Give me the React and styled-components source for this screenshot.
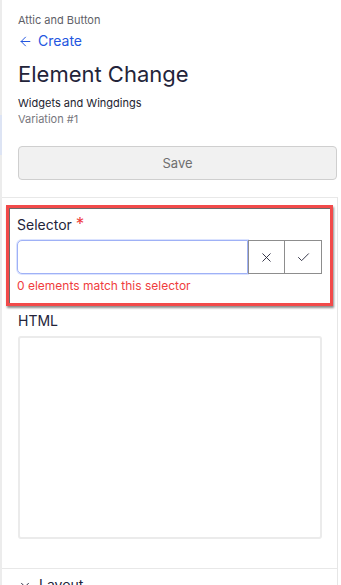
import React from 'react';
import styled, { createGlobalStyle } from 'styled-components';
import { ArrowLeft, X, Check, ChevronDown } from 'lucide-react';

const GlobalStyle = createGlobalStyle`
  html, body {
    margin: 0;
    padding: 0;
    background: #ffffff;
  }
  body {
    font-family: Inter, "Noto Sans", sans-serif;
    color: #1f2037;
    -webkit-font-smoothing: antialiased;
  }
`;

const Page = styled.div`
  display: flex;
  height: 585px;
  overflow: hidden;
`;

const Rail = styled.div`
  width: 2px;
  flex-shrink: 0;
  background: linear-gradient(
    to bottom,
    #ececec 0,
    #ececec 115px,
    #dde4f4 115px,
    #dde4f4 155px,
    #ececec 155px
  );
`;

const Panel = styled.div`
  flex: 1;
  display: flex;
  flex-direction: column;
  min-width: 0;
`;

const Header = styled.header`
  display: flex;
  flex-direction: column;
  padding: 13px 3px 17px 16px;
`;

const Crumb = styled.div`
  font-size: 11px;
  line-height: 14px;
  color: #5f5f68;
`;

const BackLink = styled.a`
  display: flex;
  align-items: center;
  gap: 5px;
  margin-top: 5px;
  font-size: 14px;
  line-height: 18px;
  color: #2456e0;
  text-decoration: none;
  cursor: pointer;
`;

const Title = styled.h1`
  margin: 10px 0 0;
  font-size: 22px;
  line-height: 28px;
  font-weight: 400;
  color: #23243a;
`;

const Meta = styled.div`
  margin-top: ${({ $gap }) => $gap || 0}px;
  font-size: 11px;
  line-height: 14px;
  color: ${({ $muted }) => ($muted ? '#77777d' : '#22232f')};
`;

const SaveButton = styled.button`
  margin-top: 20px;
  height: 34px;
  width: 319px;
  border: 1px solid #cfcfcf;
  border-radius: 4px;
  background: #f1f1f1;
  color: #6f6f6f;
  font-family: inherit;
  font-size: 13px;
`;

const Body = styled.section`
  width: 336px;
  flex: 1;
  display: flex;
  flex-direction: column;
  border-top: 1px solid #e8e8e8;
  border-right: 1px solid #e6e6e6;
  box-sizing: border-box;
  padding-top: 7px;
`;

const Highlight = styled.div`
  margin: 0 4px;
  padding: 7px 8px 9px;
  border: 3px solid #f24a4a;
  box-shadow: inset 1px 1px 0 #6a6a6a, 1px 2px 2px rgba(0, 0, 0, 0.45);
  display: flex;
  flex-direction: column;
`;

const Label = styled.label`
  display: flex;
  gap: 4px;
  font-size: 14px;
  line-height: 20px;
  color: #23243a;
`;

const Required = styled.span`
  color: #ee3b3b;
  font-size: 17px;
  line-height: 18px;
`;

const InputRow = styled.div`
  display: flex;
  margin-top: 5px;
  height: 34px;
`;

const Input = styled.input`
  width: 231px;
  box-sizing: border-box;
  border: 1px solid #9fb1f6;
  border-radius: 5px 0 0 5px;
  box-shadow: 0 0 0 1px #dbe3ff;
  outline: none;
  font-family: inherit;
  font-size: 13px;
  padding: 0 8px;
`;

const IconButton = styled.button`
  width: 37px;
  display: flex;
  align-items: center;
  justify-content: center;
  border: 1px solid #8d8d8d;
  border-left: ${({ $first }) => ($first ? '1px solid #8d8d8d' : 'none')};
  background: #ffffff;
  color: #1e1f33;
  padding: 0;
`;

const ErrorText = styled.div`
  margin-top: 4px;
  font-size: 12px;
  line-height: 16px;
  color: #ef3d3d;
`;

const Field = styled.div`
  display: flex;
  flex-direction: column;
  padding: 5px 0 0 16px;
`;

const CodeBox = styled.div`
  margin-top: 5px;
  width: 304px;
  height: 203px;
  box-sizing: border-box;
  border: 2px solid #ebebeb;
  border-radius: 3px;
  background: #ffffff;
`;

const Section = styled.div`
  margin-top: 29px;
  border-top: 1px solid #e8e8e8;
  display: flex;
  align-items: center;
  gap: 7px;
  padding: 6px 16px 0;
  font-size: 14px;
  line-height: 20px;
  color: #23243a;
`;

export default function App() {
  return (
    <>
      <GlobalStyle />
      <Page>
        <Rail />
        <Panel>
          <Header>
            <Crumb>Attic and Button</Crumb>
            <BackLink>
              <ArrowLeft size={15} strokeWidth={1.6} />
              Create
            </BackLink>
            <Title>Element Change</Title>
            <Meta $gap={8}>Widgets and Wingdings</Meta>
            <Meta $gap={2} $muted>Variation #1</Meta>
            <SaveButton>Save</SaveButton>
          </Header>
          <Body>
            <Highlight>
              <Label>
                Selector <Required>*</Required>
              </Label>
              <InputRow>
                <Input />
                <IconButton $first>
                  <X size={15} strokeWidth={1.4} />
                </IconButton>
                <IconButton>
                  <Check size={15} strokeWidth={1.4} />
                </IconButton>
              </InputRow>
              <ErrorText>0 elements match this selector</ErrorText>
            </Highlight>
            <Field>
              <Label>HTML</Label>
              <CodeBox />
            </Field>
            <Section>
              <ChevronDown size={14} strokeWidth={1.6} />
              Layout
            </Section>
          </Body>
        </Panel>
      </Page>
    </>
  );
}
